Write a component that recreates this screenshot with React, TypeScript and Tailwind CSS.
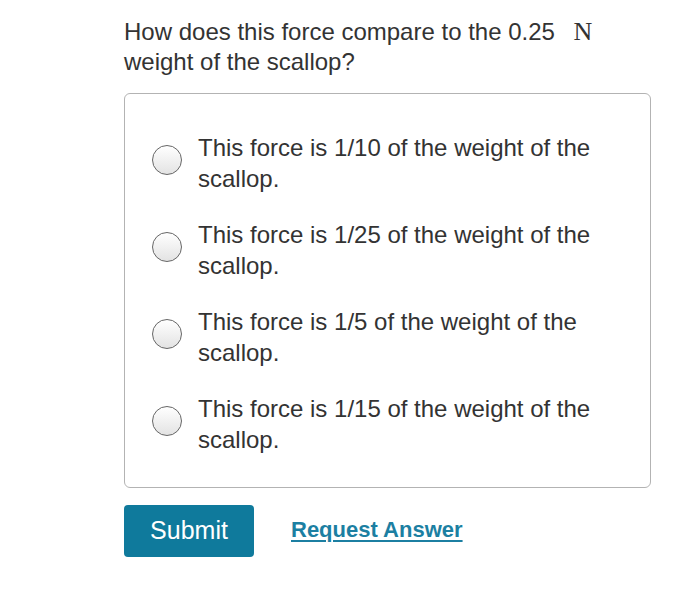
import React from "react";

const options = [
  "This force is 1/10 of the weight of the scallop.",
  "This force is 1/25 of the weight of the scallop.",
  "This force is 1/5 of the weight of the scallop.",
  "This force is 1/15 of the weight of the scallop.",
];

export default function App() {
  return (
    <div
      className="w-[700px] h-[602px] bg-white text-[#333333] pl-[124px] pt-[17px]"
      style={{ fontFamily: '"Liberation Sans", Arial, sans-serif' }}
    >
      <p className="text-[24px] leading-[30px] w-[500px]">
        How does this force compare to the 0.25{" "}
        <span className="ml-[12px] text-[26px]" style={{ fontFamily: '"Liberation Serif", serif' }}>N</span>{" "}
        weight of the scallop?
      </p>
      <div className="mt-[16px] w-[527px] h-[395px] border border-[#b3b3b3] rounded-[6px] pt-[38px] pl-[27px] flex flex-col gap-[25px]">
        {options.map((o) => (
          <div key={o} className="flex items-center">
            <div className="mb-[6px] w-[30px] h-[30px] rounded-full border-[1.5px] border-[#666666] bg-gradient-to-b from-white to-[#e3e3e3] shrink-0" />
            <div className="ml-[16px] text-[24px] leading-[31px] w-[440px]">{o}</div>
          </div>
        ))}
      </div>
      <div className="mt-[17px] flex items-center">
        <button className="w-[130px] h-[52px] rounded-[4px] bg-[#0f7a9c] text-white text-[25px]">
          Submit
        </button>
        <a className="ml-[37px] text-[22px] font-bold text-[#1c7fa2] underline underline-offset-[3px] mt-[-4px]">
          Request Answer
        </a>
      </div>
    </div>
  );
}
